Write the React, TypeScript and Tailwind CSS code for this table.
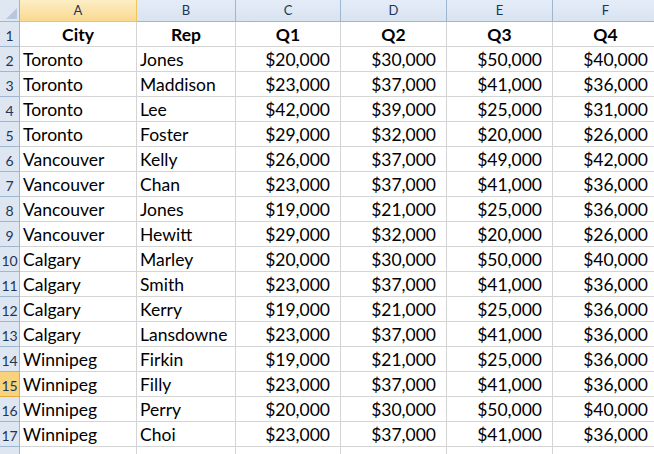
import React from "react";

const rows: [string, string, string, string, string, string][] = [
  ["Toronto", "Jones", "$20,000", "$30,000", "$50,000", "$40,000"],
  ["Toronto", "Maddison", "$23,000", "$37,000", "$41,000", "$36,000"],
  ["Toronto", "Lee", "$42,000", "$39,000", "$25,000", "$31,000"],
  ["Toronto", "Foster", "$29,000", "$32,000", "$20,000", "$26,000"],
  ["Vancouver", "Kelly", "$26,000", "$37,000", "$49,000", "$42,000"],
  ["Vancouver", "Chan", "$23,000", "$37,000", "$41,000", "$36,000"],
  ["Vancouver", "Jones", "$19,000", "$21,000", "$25,000", "$36,000"],
  ["Vancouver", "Hewitt", "$29,000", "$32,000", "$20,000", "$26,000"],
  ["Calgary", "Marley", "$20,000", "$30,000", "$50,000", "$40,000"],
  ["Calgary", "Smith", "$23,000", "$37,000", "$41,000", "$36,000"],
  ["Calgary", "Kerry", "$19,000", "$21,000", "$25,000", "$36,000"],
  ["Calgary", "Lansdowne", "$23,000", "$37,000", "$41,000", "$36,000"],
  ["Winnipeg", "Firkin", "$19,000", "$21,000", "$25,000", "$36,000"],
  ["Winnipeg", "Filly", "$23,000", "$37,000", "$41,000", "$36,000"],
  ["Winnipeg", "Perry", "$20,000", "$30,000", "$50,000", "$40,000"],
  ["Winnipeg", "Choi", "$23,000", "$37,000", "$41,000", "$36,000"],
];

const cols = ["A", "B", "C", "D", "E", "F"];
const font = { fontFamily: "Lato, 'Liberation Sans', sans-serif" };

export default function App() {
  return (
    <div className="w-[654px] h-[454px] overflow-hidden bg-white" style={font}>
      <div className="grid grid-cols-[20px_117px_99px_105px_106px_106px_106px] grid-rows-[22px_repeat(17,25px)_25px] text-black">
        {/* corner */}
        <div className="relative bg-[#dfe7f2] border-r border-b border-[#9eb6ce]">
          <div className="absolute right-[2px] bottom-[2px] w-0 h-0 border-l-[11px] border-l-transparent border-b-[11px] border-b-[#b8c7da]" />
        </div>
        {cols.map((c) => (
          <div
            key={c}
            className={
              c === "A"
                ? "flex items-center justify-center pt-[1px] text-[13px] text-[#1d3558] bg-gradient-to-b from-[#fdeec4] to-[#f9d98f] border-r border-b border-[#f2c45a]"
                : "flex items-center justify-center pt-[1px] text-[13px] text-[#1d3558] bg-gradient-to-b from-[#e4ecf7] to-[#d9e4f1] border-r border-b border-[#9eb6ce]"
            }
          >
            {c}
          </div>
        ))}
        {/* header row 1 */}
        <div className="flex items-center justify-center pt-[2px] text-[14px] text-[#1d3558] bg-[#dde6f1] border-r border-b border-[#9eb6ce]">1</div>
        {["City", "Rep", "Q1", "Q2", "Q3", "Q4"].map((h) => (
          <div key={h} className="flex items-center justify-center pt-[2px] text-[17.5px] font-bold border-r border-b border-[#d4d4d4]">
            {h}
          </div>
        ))}
        {rows.map((r, i) => {
          const n = i + 2;
          const sel = n === 15;
          return (
            <React.Fragment key={n}>
              <div
                className={
                  sel
                    ? "flex items-center justify-center pt-[2px] text-[14px] text-[#1d3558] bg-[#f8d27c] border-r border-b border-[#e2a93b]"
                    : "flex items-center justify-center pt-[2px] text-[14px] text-[#1d3558] bg-[#dde6f1] border-r border-b border-[#9eb6ce]"
                }
              >
                {n}
              </div>
              <div className="flex items-center pl-[3px] pt-[2px] text-[17.5px] border-r border-b border-[#d4d4d4] whitespace-nowrap">{r[0]}</div>
              <div className="flex items-center pl-[3px] pt-[2px] text-[17.5px] border-r border-b border-[#d4d4d4] whitespace-nowrap">{r[1]}</div>
              {r.slice(2).map((v, j) => (
                <div key={j} className="flex items-center justify-end pr-[10px] pt-[2px] text-[17.5px] border-r border-b border-[#d4d4d4] whitespace-nowrap">
                  {v}
                </div>
              ))}
            </React.Fragment>
          );
        })}
        <div className="bg-[#dde6f1] border-r border-[#9eb6ce]" />
        {cols.map((c) => (
          <div key={c} className="border-r border-[#d4d4d4]" />
        ))}
      </div>
    </div>
  );
}
